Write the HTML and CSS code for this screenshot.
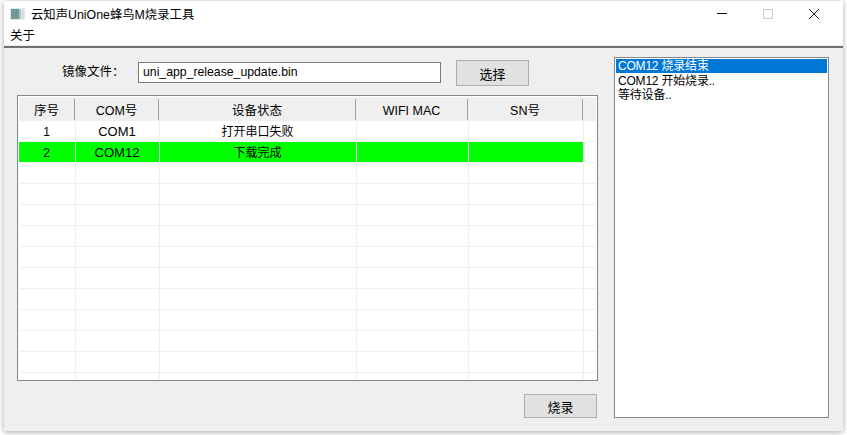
FILE: index.html
```html
<!DOCTYPE html>
<html lang="zh">
<head>
<meta charset="utf-8">
<title>云知声UniOne蜂鸟M烧录工具</title>
<link rel="stylesheet" href="styles.css">
</head>
<body>
<div class="window">
  <header class="titlebar">
    <svg class="app-icon" width="15" height="12" viewBox="0 0 15 12"><rect width="15" height="12" fill="#e4e8ea"/><rect x="1" y="1" width="8" height="10" fill="#6f9a9c"/><rect x="9" y="1" width="2" height="10" fill="#a9ccc2"/><rect x="12" y="1" width="2" height="10" fill="#d5dfe4"/></svg>
    <span class="title">云知声UniOne蜂鸟M烧录工具</span>
    <div class="controls">
      <svg class="ctl" width="46" height="26" viewBox="0 0 46 26"><path d="M18 12.500h10" stroke="#111" fill="none"/></svg>
      <svg class="ctl" width="46" height="26" viewBox="0 0 46 26"><rect x="18.500" y="8.500" width="9" height="9" stroke="#ccc" fill="none"/></svg>
      <svg class="ctl" width="46" height="26" viewBox="0 0 46 26"><path d="M18 8l10 10M28 8l-10 10" stroke="#222" fill="none"/></svg>
    </div>
  </header>
  <nav class="menubar"><span>关于</span></nav>
  <main class="content">
    <section class="left">
      <div class="file-row">
        <label class="file-label">镜像文件：</label>
        <div class="file-input">uni_app_release_update.bin</div>
        <button class="btn">选择</button>
      </div>
      <div class="table">
        <div class="row head">
          <div class="c c1">序号</div><div class="c c2">COM号</div><div class="c c3">设备状态</div><div class="c c4">WIFI MAC</div><div class="c c5">SN号</div>
        </div>
        <div class="row"><div class="c c1">1</div><div class="c c2">COM1</div><div class="c c3">打开串口失败</div><div class="c c4"></div><div class="c c5"></div></div>
        <div class="row ok"><div class="c c1">2</div><div class="c c2">COM12</div><div class="c c3">下载完成</div><div class="c c4"></div><div class="c c5"></div></div>
        <div class="row"><div class="c c1"></div><div class="c c2"></div><div class="c c3"></div><div class="c c4"></div><div class="c c5"></div></div>
        <div class="row"><div class="c c1"></div><div class="c c2"></div><div class="c c3"></div><div class="c c4"></div><div class="c c5"></div></div>
        <div class="row"><div class="c c1"></div><div class="c c2"></div><div class="c c3"></div><div class="c c4"></div><div class="c c5"></div></div>
        <div class="row"><div class="c c1"></div><div class="c c2"></div><div class="c c3"></div><div class="c c4"></div><div class="c c5"></div></div>
        <div class="row"><div class="c c1"></div><div class="c c2"></div><div class="c c3"></div><div class="c c4"></div><div class="c c5"></div></div>
        <div class="row"><div class="c c1"></div><div class="c c2"></div><div class="c c3"></div><div class="c c4"></div><div class="c c5"></div></div>
        <div class="row"><div class="c c1"></div><div class="c c2"></div><div class="c c3"></div><div class="c c4"></div><div class="c c5"></div></div>
        <div class="row"><div class="c c1"></div><div class="c c2"></div><div class="c c3"></div><div class="c c4"></div><div class="c c5"></div></div>
        <div class="row"><div class="c c1"></div><div class="c c2"></div><div class="c c3"></div><div class="c c4"></div><div class="c c5"></div></div>
        <div class="row"><div class="c c1"></div><div class="c c2"></div><div class="c c3"></div><div class="c c4"></div><div class="c c5"></div></div>
        <div class="row last"><div class="c c1"></div><div class="c c2"></div><div class="c c3"></div><div class="c c4"></div><div class="c c5"></div></div>
      </div>
      <div class="burn-row"><button class="btn">烧录</button></div>
    </section>
    <aside class="log">
      <div class="log-item selected">COM12 烧录结束</div>
      <div class="log-item">COM12 开始烧录..</div>
      <div class="log-item">等待设备..</div>
    </aside>
  </main>
</div>
</body>
</html>
```
FILE: styles.css
```css
* { box-sizing: border-box; }
html, body { margin: 0; height: 100%; background: #fff; overflow: hidden; }
body { padding: 1px 4px 4px; font-family: "Liberation Sans", "Noto Sans CJK SC", sans-serif; font-size: 12px; color: #000; }
.window { height: 430px; width: 839px; display: flex; flex-direction: column; background: #fff; box-shadow: 0 1px 6px rgba(0,0,0,.35); }
.titlebar { height: 26px; display: flex; align-items: center; padding-left: 6px; flex: none; }
.app-icon { flex: none; }
.title { margin-left: 6px; font-size: 12.350px; }
.controls { margin-left: auto; display: flex; margin-right: 6px; }
.ctl { display: block; }
.menubar { height: 19px; padding-left: 6px; font-size: 12.500px; line-height: 19px; flex: none; border-bottom: 1px solid #ececec; }
.content { flex: 1; display: flex; background: #efefef; border-top: 2px solid #707070; padding: 9px 14px 13px 13px; gap: 16px; min-height: 0; }
.left { width: 581px; flex: none; display: flex; flex-direction: column; }
.file-row { display: flex; align-items: flex-start; height: 26px; margin-top: 3px; }
.file-label { margin-left: 45px; width: 76px; font-size: 12.500px; line-height: 24px; }
.file-input { width: 303px; height: 21px; margin-top: 2px; background: #fff; border: 1px solid #7a7a7a; padding-left: 4px; line-height: 19px; font-size: 12.250px; white-space: nowrap; }
.btn { width: 73px; height: 26px; background: #e1e1e1; border: 1px solid #adadad; font: inherit; font-size: 13px; padding: 0; color: #000; }
.file-row .btn { margin-left: 15px; }
.table { margin-top: 9px; width: 581px; height: 286px; border: 1px solid #828790; background: #fff; padding: 1px 1px 0; overflow: hidden; }
.row { display: flex; height: 21px; border-bottom: 1px solid #efefef; }
.row.last { height: 8px; border-bottom: none; }
.row.head { height: 24px; background: #efefef; border-bottom: none; }
.c { text-align: center; line-height: 22px; border-right: 1px solid #efefef; flex: none; white-space: nowrap; padding-right: 1px; }
.c1 { width: 57px; }
.c2 { width: 84px; font-size: 13px; }
.c3 { width: 197px; }
.c4 { width: 112px; }
.c5 { width: 115px; }
.head .c { line-height: 25px; border-right: 1px solid #a0a0a0; font-size: 12.500px; height: 21px; margin-top: 2px; padding-right: 0; }
.head .c1 { width: 56px; }
.ok .c { border-right-color: #f4fbf4; background: #00ff00; }
.ok .c5 { border-right-color: #efefef; }
.burn-row { display: flex; justify-content: flex-end; margin-top: 13px; padding-right: 1px; }
.burn-row .btn { height: 24px; }
.log { width: 215px; height: 361px; flex: none; background: #fff; border: 1px solid #828790; padding: 1px; font-size: 12px; }
.log-item { height: 14px; line-height: 15px; padding-left: 2px; white-space: nowrap; letter-spacing: -.2px; }
.log-item.selected { background: #0078d7; color: #fff; margin-bottom: 1px; }
```
